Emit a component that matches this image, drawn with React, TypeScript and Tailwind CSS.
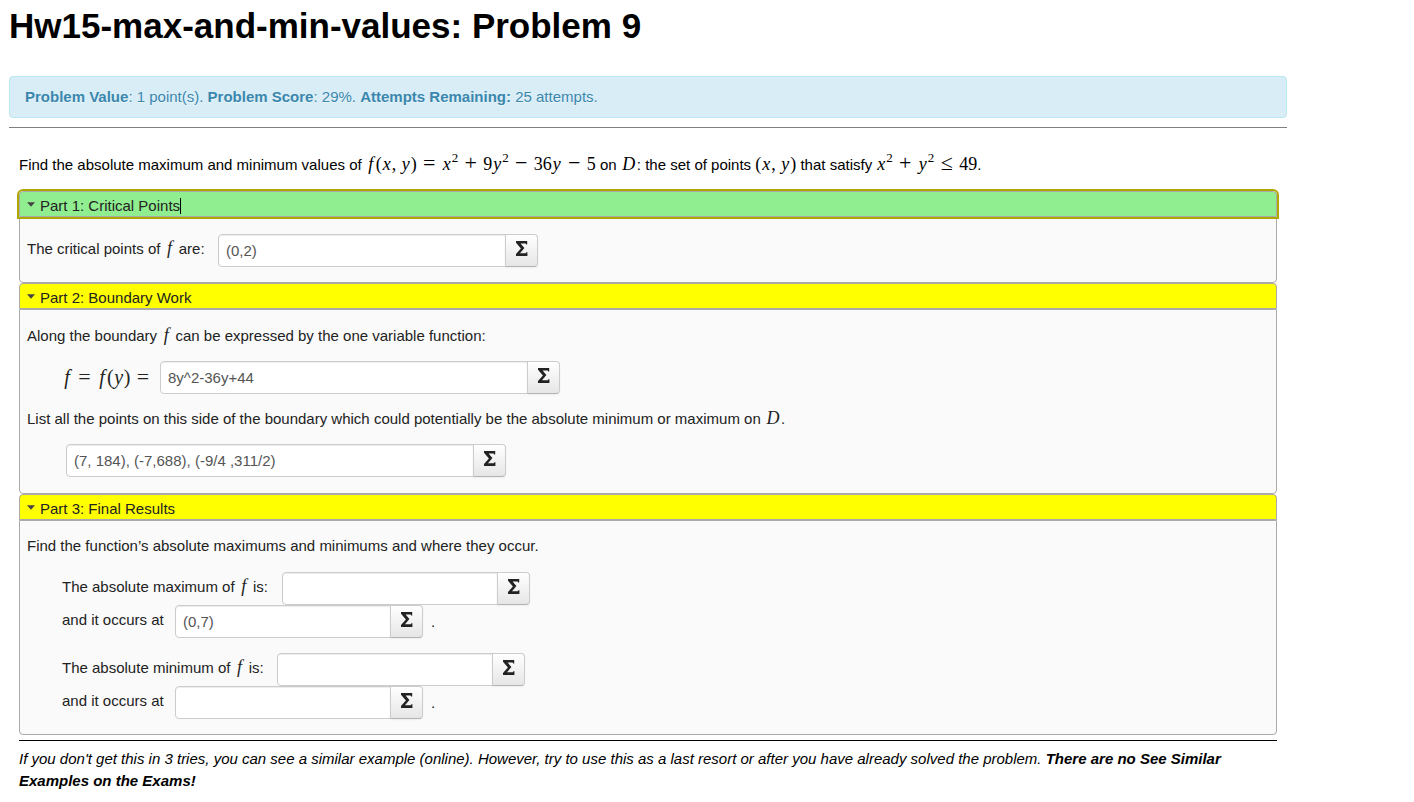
import { useState, type ReactNode } from 'react';
import clsx from 'clsx';

function Var({ children, wide }: { children: ReactNode, wide?: boolean }) {
    return <i className={clsx('inline-block text-center', wide ? 'w-4' : 'w-[10px]')}>{children}</i>;
}

function Op({ children }: { children: ReactNode }) {
    return <span className="inline-block w-[25px] text-center text-[22px] leading-none">{children}</span>;
}

function Sup({ children }: { children: ReactNode }) {
    return <sup className="-top-2 text-[13px]">{children}</sup>;
}

function MathText({ children, large }: { children: ReactNode, large?: boolean }) {
    return (
        <span className={clsx('whitespace-nowrap font-["Liberation_Serif",serif] leading-none', large ? 'text-[20px]' : 'text-[18px]')}>
            {children}
        </span>
    );
}

function SigmaIcon() {
    return (
        <svg width="12" height="15" viewBox="0 0 12 15" fill="#222" className="mb-[5px]" aria-hidden="true">
            <path d="M0 0H11.2V3.4H10.2L9.6 2.4H4.6L8.4 7.1L4 12.3H9.8L10.4 11.2H11.4V15H0V12.9L4.9 7.4L0 1.8Z" />
        </svg>
    );
}

function AnswerBox({ id, value, width }: { id: string, value: string, width: string }) {
    const [answer, setAnswer] = useState(value);

    return (
        <span className="flex h-[33px]">
            <input
                id={id}
                type="text"
                value={answer}
                onChange={(e) => setAnswer(e.target.value)}
                className={clsx('rounded-l border border-[#ccc] bg-white px-[7px] text-[15px] text-[#555] shadow-[inset_0_1px_1px_rgba(0,0,0,0.075)] outline-none', width)}
            />
            <button
                type="button"
                aria-label="Equation editor"
                className="-ml-px flex w-[33px] items-center justify-center rounded-r border border-[#ccc] border-b-[#b3b3b3] bg-linear-to-b from-white to-[#e6e6e6] shadow-[0_1px_2px_rgba(0,0,0,0.05)]"
            >
                <SigmaIcon />
            </button>
        </span>
    );
}

function Part({ title, active, children }: { title: string, active?: boolean, children: ReactNode }) {
    return (
        <details open className="text-[#222]">
            <summary
                className={clsx(
                    'flex h-[26px] cursor-pointer list-none items-center rounded-t border border-[#aaa] pl-[7px] pt-[3px]',
                    active ? 'relative bg-[#90ee90] outline-2 outline-[#aea700]' : 'bg-[#ff0]'
                )}
            >
                <svg width="8" height="5" viewBox="0 0 9 5" fill="#444" className="mb-[3px] mr-[5px]" aria-hidden="true">
                    <path d="M0 0H9L4.5 5Z" />
                </svg>
                {title}
                {active && <span className="h-4 w-px bg-black" />}
            </summary>
            <div className="rounded-b border border-[#aaa] bg-[#fafafa] px-[7px]">{children}</div>
        </details>
    );
}

export default function App() {
    return (
        <main className='min-h-screen bg-white pl-[9px] pr-[127px] font-["Liberation_Sans",Arial,sans-serif] text-[15px] leading-[22px] text-black'>
            <h1 className="pt-[6px] text-[35px] font-bold leading-10">Hw15-max-and-min-values: Problem 9</h1>

            <div className="mt-[30px] rounded border border-[#bce8f1] bg-[#d9edf7] px-[15px] py-[9px] text-[#3a87ad] [text-shadow:0_1px_0_rgba(255,255,255,0.5)]">
                <b>Problem Value</b>: 1 point(s). <b>Problem Score</b>: 29%. <b>Attempts Remaining:</b> 25 attempts.
            </div>
            <hr className="mt-[9px] border-[#808080]" />

            <div className="px-[10px] pt-6">
                <p className="mb-[15px]">
                    Find the absolute maximum and minimum values of{' '}
                    <MathText>
                        <Var>f</Var>(<Var>x</Var>, <Var>y</Var>)<Op>=</Op><Var>x</Var><Sup>2</Sup><Op>+</Op>9<Var>y</Var><Sup>2</Sup><Op>−</Op>36<Var>y</Var><Op>−</Op>5
                    </MathText>{' '}
                    on <MathText><Var wide>D</Var></MathText>: the set of points{' '}
                    <MathText>(<Var>x</Var>, <Var>y</Var>)</MathText> that satisfy{' '}
                    <MathText><Var>x</Var><Sup>2</Sup><Op>+</Op><Var>y</Var><Sup>2</Sup><Op>≤</Op>49</MathText>.
                </p>

                <Part title="Part 1: Critical Points" active>
                    <div className="flex items-center pb-[15px] pt-4">
                        <label htmlFor="critical" className="w-[191px] pb-1">The critical points of <MathText><Var>f</Var></MathText> are:</label>
                        <AnswerBox id="critical" value="(0,2)" width="w-[288px]" />
                    </div>
                </Part>

                <Part title="Part 2: Boundary Work">
                    <div className="flex flex-col gap-[14px] pb-4 pt-[15px]">
                        <p>Along the boundary <MathText><Var>f</Var></MathText> can be expressed by the one variable function:</p>
                        <div className="flex items-center pl-[35px]">
                            <label htmlFor="boundary" className="w-[98px]">
                                <MathText large><Var>f</Var><Op>=</Op><Var>f</Var>(<Var>y</Var>)<Op>=</Op></MathText>
                            </label>
                            <AnswerBox id="boundary" value="8y^2-36y+44" width="w-[368px]" />
                        </div>
                        <label htmlFor="points">
                            List all the points on this side of the boundary which could potentially be the absolute minimum or maximum on <MathText><Var wide>D</Var></MathText>.
                        </label>
                        <div className="pl-[39px]">
                            <AnswerBox id="points" value="(7, 184), (-7,688), (-9/4 ,311/2)" width="w-[408px]" />
                        </div>
                    </div>
                </Part>

                <Part title="Part 3: Final Results">
                    <div className="flex flex-col gap-[15px] pb-[15px] pt-[14px]">
                        <p>Find the function’s absolute maximums and minimums and where they occur.</p>
                        <div className="pl-[35px]">
                            <div className="flex items-center">
                                <label htmlFor="max" className="w-[220px] pb-1">The absolute maximum of <MathText><Var>f</Var></MathText> is:</label>
                                <AnswerBox id="max" value="" width="w-[216px]" />
                            </div>
                            <div className="flex items-center">
                                <label htmlFor="max-at" className="w-[113px] pb-1">and it occurs at</label>
                                <AnswerBox id="max-at" value="(0,7)" width="w-[216px]" />
                                <span className="pl-2">.</span>
                            </div>
                        </div>
                        <div className="pl-[35px]">
                            <div className="flex items-center">
                                <label htmlFor="min" className="w-[215px] pb-1">The absolute minimum of <MathText><Var>f</Var></MathText> is:</label>
                                <AnswerBox id="min" value="" width="w-[216px]" />
                            </div>
                            <div className="flex items-center">
                                <label htmlFor="min-at" className="w-[113px] pb-1">and it occurs at</label>
                                <AnswerBox id="min-at" value="" width="w-[216px]" />
                                <span className="pl-2">.</span>
                            </div>
                        </div>
                    </div>
                </Part>

                <hr className="mt-[5px] border-black" />
                <p className="mt-[7px] italic">
                    If you don't get this in 3 tries, you can see a similar example (online). However, try to use this as a last resort or after you have already solved the problem. <b>There are no See Similar Examples on the Exams!</b>
                </p>
            </div>
        </main>
    );
}
